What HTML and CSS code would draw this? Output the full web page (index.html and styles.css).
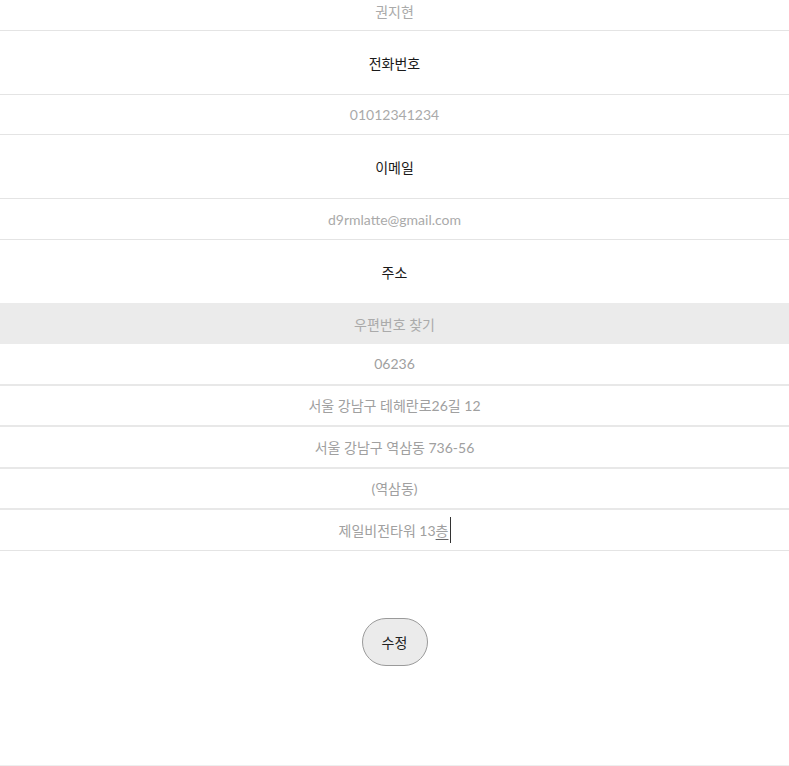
FILE: index.html
```html
<!DOCTYPE html>
<html lang="ko">
<head>
<meta charset="utf-8">
<title>회원정보 수정</title>
<link rel="stylesheet" href="styles.css">
</head>
<body>
<main class="form">
  <div class="value">권지현</div>
  <div class="label">전화번호</div>
  <div class="value">01012341234</div>
  <div class="label">이메일</div>
  <div class="value">d9rmlatte@gmail.com</div>
  <div class="label">주소</div>
  <div class="zip-btn">우편번호 찾기</div>
  <div class="addr">06236</div>
  <div class="addr">서울 강남구 테헤란로26길 12</div>
  <div class="addr">서울 강남구 역삼동 736-56</div>
  <div class="addr">(역삼동)</div>
  <div class="addr addr-last">제일비전타워 13<span class="composing">층</span><span class="caret"></span></div>
  <div class="actions">
    <button class="submit" type="button">수정</button>
  </div>
</main>
<footer class="footer"></footer>
</body>
</html>
```

FILE: styles.css
```css
html, body {
  margin: 0;
  padding: 0;
  background: #fff;
}
body {
  font-family: Lato, "Noto Sans CJK KR", sans-serif;
  font-size: 14px;
  font-size-adjust: from-font;
  color: #222;
}
.form {
  margin-top: -10px;
  display: flex;
  flex-direction: column;
}
.value {
  height: 39px;
  border-top: 1px solid #e4e4e4;
  border-bottom: 1px solid #e4e4e4;
  display: flex;
  align-items: center;
  justify-content: center;
  color: #aaa;
}
.value + .label + .value + .label + .value {
  height: 40px;
}
.label {
  height: 63px;
  display: flex;
  align-items: center;
  justify-content: center;
  color: #1a1a1a;
}
.zip-btn {
  height: 41px;
  background: #ebebeb;
  display: flex;
  align-items: center;
  justify-content: center;
  color: #aaa;
}
.addr {
  height: 39.5px;
  border-bottom: 2px solid #e8e8e8;
  display: flex;
  align-items: center;
  justify-content: center;
  color: #a0a0a0;
}
.addr-last {
  border-bottom: 1px solid #e4e4e4;
}
.composing {
  text-decoration: underline;
  text-decoration-color: #666;
  text-underline-offset: 3px;
}
.caret {
  display: inline-block;
  width: 1px;
  height: 26px;
  background: #333;
  margin-left: 1px;
}
.actions {
  display: flex;
  justify-content: center;
  padding: 67px 0 99px;
}
.submit {
  width: 66px;
  height: 48px;
  border-radius: 24px;
  border: 1px solid #9a9a9a;
  background: #ebebeb;
  color: #222;
  font-family: Lato, "Noto Sans CJK KR", sans-serif;
  font-size: 14px;
  font-size-adjust: from-font;
  padding: 0;
}
.footer {
  border-top: 1px solid #eee;
  height: 40px;
}
```
